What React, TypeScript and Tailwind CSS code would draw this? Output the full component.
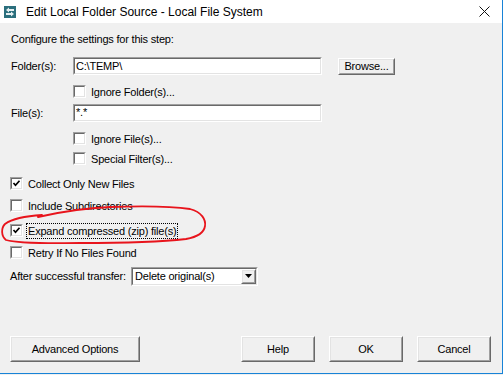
import React from 'react';

const FONT = { fontFamily: '"Liberation Sans", Arial, sans-serif' };

function Sunken({ className = '', children }: { className?: string; children?: React.ReactNode }) {
  return (
    <div className={`border border-t-[#a0a0a0] border-l-[#a0a0a0] border-b-white border-r-white ${className}`}>
      <div className="h-full w-full border border-t-[#696969] border-l-[#696969] border-b-[#e3e3e3] border-r-[#e3e3e3] bg-white">
        {children}
      </div>
    </div>
  );
}

function Raised({ className = '', children }: { className?: string; children?: React.ReactNode }) {
  return (
    <div className={`border border-t-white border-l-white border-b-[#696969] border-r-[#696969] ${className}`}>
      <div className="flex h-full w-full items-center justify-center border border-t-[#e3e3e3] border-l-[#e3e3e3] border-b-[#a0a0a0] border-r-[#a0a0a0] bg-[#f0f0f0] text-[11px] text-black">
        {children}
      </div>
    </div>
  );
}

function Check({ checked, label, focus }: { checked?: boolean; label: string; focus?: boolean }) {
  return (
    <div className="flex h-[13px] items-center">
      <Sunken className="h-[13px] w-[13px] shrink-0">
        {checked && (
          <svg width="9" height="9" viewBox="0 0 9 9">
            <polyline points="1.5,4 3.5,6.2 7.5,1.8" fill="none" stroke="#000" strokeWidth="1.7" />
          </svg>
        )}
      </Sunken>
      <span
        className={`ml-[4px] whitespace-nowrap px-[1px] text-[11px] leading-[14px] text-black ${
          focus ? 'outline outline-1 outline-dotted outline-black' : ''
        }`}
      >
        {label}
      </span>
    </div>
  );
}

function TitleIcon() {
  return (
    <svg width="12" height="12" viewBox="0 0 12 12">
      <rect width="12" height="12" fill="#2b6f7d" />
      <path d="M2 4 L5 1.5 L5 3 L10 3 L10 5 L5 5 L5 6.5 Z" fill="#e6f0f2" />
      <path d="M10 8 L7 5.5 L7 7 L2 7 L2 9 L7 9 L7 10.5 Z" fill="#e6f0f2" />
    </svg>
  );
}

export default function App() {
  return (
    <div className="h-[375px] w-[503px] bg-[#f0f0f0]" style={FONT}>
      <div className="relative flex h-[374px] w-[503px] flex-col border-r border-b border-[#1883d7] bg-[#f0f0f0]">
        {/* Title bar */}
        <div className="flex h-[23px] shrink-0 items-center bg-white pl-[4px]">
          <TitleIcon />
          <span className="ml-[10px] text-[12px] text-black">Edit Local Folder Source - Local File System</span>
          <div className="ml-auto mr-[12px] flex items-center">
            <svg width="11" height="11" viewBox="0 0 11 11">
              <path d="M0.5 0.5 L10.5 10.5 M10.5 0.5 L0.5 10.5" stroke="#111" strokeWidth="1" />
            </svg>
          </div>
        </div>

        {/* Body */}
        <div className="flex flex-1 flex-col px-[10px] text-[11px] tracking-[-0.2px] text-black">
          <div className="mt-[8px] h-[16px] pl-[1px] leading-[16px]">Configure the settings for this step:</div>

          <div className="mt-[10px] flex h-[18px] items-center">
            <span className="w-[63px] shrink-0 pl-[1px]">Folder(s):</span>
            <Sunken className="h-[18px] w-[249px]">
              <div className="pl-[1px] leading-[14px]">C:\TEMP\</div>
            </Sunken>
            <Raised className="ml-[16px] h-[17px] w-[57px]">Browse...</Raised>
          </div>

          <div className="mt-[10px] pl-[63px]">
            <Check label="Ignore Folder(s)..." />
          </div>

          <div className="mt-[6px] flex h-[18px] items-center">
            <span className="w-[63px] shrink-0 pl-[1px]">File(s):</span>
            <Sunken className="h-[18px] w-[249px]">
              <div className="pl-[1px] leading-[12px]">*.*</div>
            </Sunken>
          </div>

          <div className="mt-[10px] pl-[63px]">
            <Check label="Ignore File(s)..." />
          </div>
          <div className="mt-[7px] pl-[63px]">
            <Check label="Special Filter(s)..." />
          </div>

          <div className="mt-[12px]">
            <Check checked label="Collect Only New Files" />
          </div>
          <div className="mt-[9px]">
            <Check label="Include Subdirectories" />
          </div>
          <div className="mt-[12px]">
            <Check checked focus label="Expand compressed (zip) file(s)" />
          </div>
          <div className="mt-[9px]">
            <Check label="Retry If No Files Found" />
          </div>

          <div className="mt-[8px] flex h-[18px] items-center">
            <span className="w-[121px] shrink-0 whitespace-nowrap">After successful transfer:</span>
            <Sunken className="h-[19px] w-[127px] shrink-0">
              <div className="flex h-full items-center">
                <span className="whitespace-nowrap pl-[2px]">Delete original(s)</span>
                <Raised className="ml-auto h-[15px] w-[15px]">
                  <svg width="7" height="4" viewBox="0 0 7 4">
                    <path d="M0 0 L7 0 L3.5 4 Z" fill="#000" />
                  </svg>
                </Raised>
              </div>
            </Sunken>
          </div>

          {/* Buttons */}
          <div className="mt-auto mb-[11px] flex h-[26px] items-stretch">
            <Raised className="w-[130px]">Advanced Options</Raised>
            <Raised className="ml-auto w-[74px]">Help</Raised>
            <Raised className="ml-[14px] w-[74px]">OK</Raised>
            <Raised className="ml-[14px] mr-[1px] w-[74px]">Cancel</Raised>
          </div>
        </div>

        {/* Red hand-drawn annotation */}
        <svg className="pointer-events-none absolute left-0 top-0" width="503" height="375">
          <path
            d="M38 217 C60 212 85 208 110 207 C140 206 170 206 190 209 C202 212 206 220 205 226 C204 233 197 237 186 239 C160 242 120 243 80 243 C50 243 20 244 6 240 C1 236 1 228 5 224 C12 219 25 216 42 215"
            fill="none"
            stroke="#e8141c"
            strokeWidth="1.8"
            strokeLinecap="round"
          />
        </svg>
      </div>
    </div>
  );
}
